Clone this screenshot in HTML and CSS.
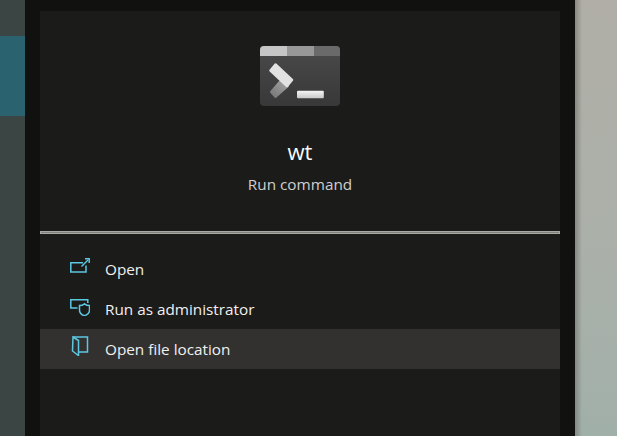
FILE: index.html
```html
<!DOCTYPE html>
<html lang="en">
<head>
<meta charset="utf-8">
<title>wt</title>
<link rel="stylesheet" href="styles.css">
</head>
<body>
<div class="desk">
  <div class="wall-left"><div class="tile"></div></div>
  <div class="shell">
    <div class="panel">
      <div class="hero">
        <svg class="app-icon" width="80" height="60" viewBox="0 0 80 60">
          <defs>
            <linearGradient id="body" x1="0" y1="0" x2="0" y2="1"><stop offset="0" stop-color="#4a4a4a"/><stop offset="1" stop-color="#383838"/></linearGradient>
            <linearGradient id="bar" x1="0" y1="0" x2="0" y2="1"><stop offset="0" stop-color="#f4f4f4"/><stop offset="1" stop-color="#c8c8c8"/></linearGradient>
            <linearGradient id="low" x1="1" y1="0" x2="0" y2="1"><stop offset="0" stop-color="#a4a4a4"/><stop offset="1" stop-color="#767676"/></linearGradient>
            <clipPath id="win"><rect width="80" height="60" rx="4"/></clipPath>
          </defs>
          <g clip-path="url(#win)">
            <rect width="80" height="60" fill="url(#body)"/>
            <rect width="28" height="10" fill="#c6c6c6"/>
            <rect x="27" width="27" height="10" fill="#989898"/>
            <rect x="54" width="26" height="10" fill="#6a6a6a"/>
          </g>
          <path d="M11 46L20 35.500L28 40L15.500 51Z" fill="url(#low)" stroke="url(#low)" stroke-width="2" stroke-linejoin="round"/>
          <path d="M10.500 24.500L15.500 18.500L32 34L27 40Z" fill="#e2e2e2" stroke="#e2e2e2" stroke-width="2.500" stroke-linejoin="round"/>
          <rect x="37" y="44.800" width="26.800" height="7.500" rx="1" fill="url(#bar)"/>
        </svg>
        <div class="app-name">wt</div>
        <div class="app-kind">Run command</div>
      </div>
      <div class="divider"></div>
      <ul class="actions">
        <li class="action">
          <svg class="act-icon" width="20" height="20" viewBox="0 0 20 20" fill="none" stroke="#5cc8e2" stroke-width="1.500">
            <path d="M13 6.800H.8V16H16V9.500"/>
            <path d="M11.500 10.500L18 4"/>
            <path d="M15 2.800H19.200V7"/>
          </svg>
          <span>Open</span>
        </li>
        <li class="action">
          <svg class="act-icon" width="20" height="20" viewBox="0 0 20 20" fill="none" stroke="#5cc8e2" stroke-width="1.500">
            <path d="M7.500 12H.8V3.800H17.800V7"/>
            <path d="M9.500 9.500C11.500 9.500 13 9 14.500 7.800C16 9 17.500 9.500 19.500 9.500V14C19.500 17 17 19 14.500 19.800C12 19 9.500 17 9.500 14Z"/>
          </svg>
          <span>Run as administrator</span>
        </li>
        <li class="action action-active">
          <svg class="act-icon" width="20" height="20" viewBox="0 0 20 20" fill="none" stroke="#5cc8e2" stroke-width="1.500">
            <path d="M3 1H17.500V16H9"/>
            <path d="M3 1L8.500 4.500V19.500L2.500 15Z"/>
          </svg>
          <span>Open file location</span>
        </li>
      </ul>
    </div>
  </div>
  <div class="wall-right"></div>
</div>
</body>
</html>
```
FILE: styles.css
```css
* { box-sizing: border-box; }
html, body { margin: 0; padding: 0; height: 100%; overflow: hidden; background: #111110; }
body { font-family: "Open Sans", "Noto Sans", sans-serif; color: #f2f2f2; }
.desk { display: flex; width: 617px; height: 436px; }
.wall-left { flex: 0 0 25px; padding-top: 36px; background: #3b4544; }
.tile { height: 80px; background: #2a6270; }
.shell { flex: 0 0 550px; padding: 11px 15px 0; background: #111110; }
.panel { height: 425px; background: #1b1b1a; }
.hero { display: flex; flex-direction: column; align-items: center; height: 220px; padding-top: 35px; }
.app-icon { display: block; }
.app-name { margin-top: 30px; font-size: 22px; line-height: 30px; color: #fafafa; }
.app-kind { margin-top: 8px; font-size: 15.300px; line-height: 20px; color: #cfcfcf; }
.divider { height: 3px; background: #7f7f7c; margin-bottom: 15px; border: 1px solid #a9a9a6; }
.actions { list-style: none; margin: 0; padding: 0; }
.action { display: flex; align-items: center; gap: 15px; height: 40px; padding-left: 30px; font-size: 15.300px; color: #f0f0f0; }
.action-active { background: #323130; }
.act-icon { flex: none; margin-top: -6px; }
.wall-right { flex: 1; background: linear-gradient(90deg, rgba(110,110,105,.6) 0, rgba(110,110,105,0) 7px), linear-gradient(180deg, #b0aea6, #aab0a9 60%, #a1afa9); }
```
